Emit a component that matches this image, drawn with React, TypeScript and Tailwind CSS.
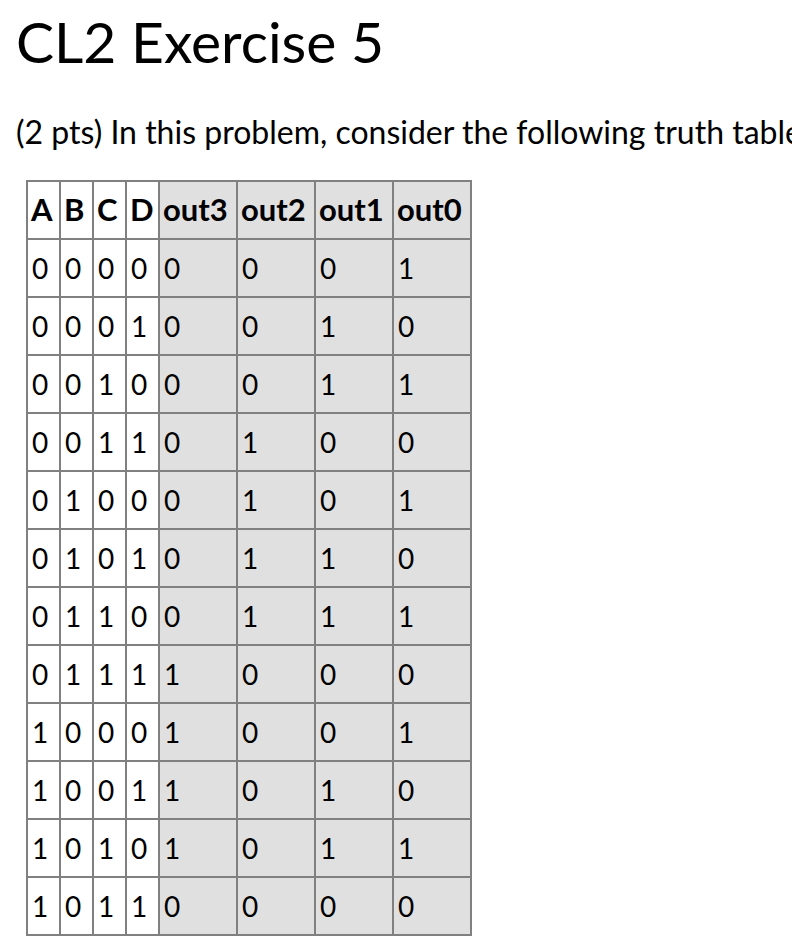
const rows = [
  ["0", "0", "0", "0", "0", "0", "0", "1"],
  ["0", "0", "0", "1", "0", "0", "1", "0"],
  ["0", "0", "1", "0", "0", "0", "1", "1"],
  ["0", "0", "1", "1", "0", "1", "0", "0"],
  ["0", "1", "0", "0", "0", "1", "0", "1"],
  ["0", "1", "0", "1", "0", "1", "1", "0"],
  ["0", "1", "1", "0", "0", "1", "1", "1"],
  ["0", "1", "1", "1", "1", "0", "0", "0"],
  ["1", "0", "0", "0", "1", "0", "0", "1"],
  ["1", "0", "0", "1", "1", "0", "1", "0"],
  ["1", "0", "1", "0", "1", "0", "1", "1"],
  ["1", "0", "1", "1", "0", "0", "0", "0"],
]

const headers = ["A", "B", "C", "D", "out3", "out2", "out1", "out0"]

export default function App() {
  return (
    <div className="min-h-screen bg-white text-black overflow-hidden font-['Lato',sans-serif] px-[16px]">
      <h1 className="text-[57px] leading-[1.2] pt-[7px] whitespace-nowrap">CL2 Exercise 5</h1>
      <p className="text-[32px] leading-[1.2] mt-[38px] whitespace-nowrap">
        (2 pts) In this problem, consider the following truth table
      </p>
      <table className="mt-[28px] ml-[10px] border-collapse border-2 border-[#333] text-[28px] leading-none">
        <thead>
          <tr>
            {headers.map((h, i) => (
              <th
                key={h}
                className={
                  "h-[58px] border-2 border-[#808080] px-[3px] text-left font-bold text-[31px] " +
                  (i < 4 ? "w-[33px] bg-white" : "w-[78px] bg-[#e0e0e0]")
                }
              >
                {h}
              </th>
            ))}
          </tr>
        </thead>
        <tbody>
          {rows.map((r, ri) => (
            <tr key={ri}>
              {r.map((v, i) => (
                <td
                  key={i}
                  className={
                    "h-[58px] border-2 border-[#808080] px-[4px] text-left " +
                    (i < 4 ? "bg-white" : "bg-[#e0e0e0]")
                  }
                >
                  {v}
                </td>
              ))}
            </tr>
          ))}
        </tbody>
      </table>
    </div>
  )
}
